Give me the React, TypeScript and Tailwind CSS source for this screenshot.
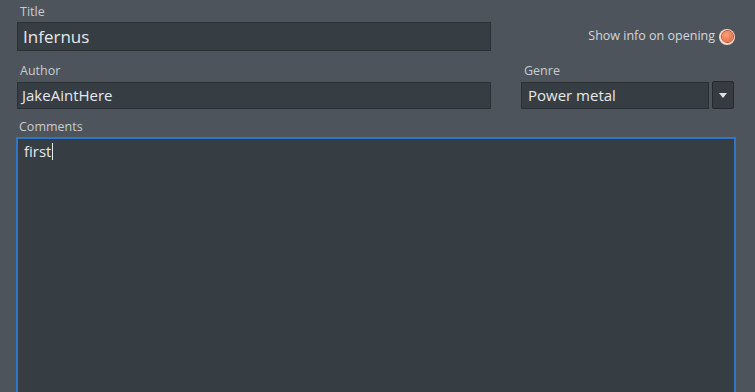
import React from "react";

const font = { fontFamily: '"Open Sans", "Noto Sans", sans-serif' };

function Label({ children }: { children: React.ReactNode }) {
  return <div className="h-[17px] pl-[3px] text-[12.5px] leading-[17px] text-[#c8ccd0]">{children}</div>;
}

export default function App() {
  return (
    <div className="h-[392px] w-[755px] overflow-hidden bg-[#4d545b] text-[#e6e9eb]" style={font}>
      <div className="pl-[17px] pr-[20px] pt-[3px]">
        {/* title row */}
        <Label>Title</Label>
        <div className="mt-[2px] flex items-center">
          <div className="flex h-[29px] w-[474px] items-center border border-[#2b3035] bg-[#363d43] pl-[5px] text-[17px]">
            Infernus
          </div>
          <div className="ml-auto flex items-center gap-[4px] text-[12.5px] text-[#d3d7da]">
            <span>Show info on opening</span>
            <span className="flex h-[16px] w-[16px] items-center justify-center rounded-full bg-[#f6dcd0]">
              <span className="h-[11px] w-[11px] rounded-full bg-[radial-gradient(circle_at_40%_35%,#f8a47c,#e0603a)] ring-1 ring-[#b94a28]" />
            </span>
          </div>
        </div>

        {/* author / genre row */}
        <div className="mt-[11px] flex">
          <div className="w-[474px]">
            <Label>Author</Label>
            <div className="mt-[3px] flex h-[27px] items-center border border-[#2b3035] bg-[#363d43] pl-[4px] text-[15px]">
              JakeAintHere
            </div>
          </div>
          <div className="ml-[30px]">
            <Label>Genre</Label>
            <div className="mt-[2px] flex items-center gap-[3px]">
              <div className="mt-[1px] flex h-[27px] w-[188px] items-center border border-[#2b3035] bg-[#363d43] pl-[6px] text-[15px]">
                Power metal
              </div>
              <div className="flex h-[28px] w-[22px] items-center justify-center rounded-[2px] border border-[#25292d] bg-[#353b41]">
                <svg width="8" height="5" viewBox="0 0 8 5">
                  <path d="M0 0h8L4 5z" fill="#dfe2e4" />
                </svg>
              </div>
            </div>
          </div>
        </div>

        {/* comments */}
        <div className="mt-[9px] -ml-[1px]">
          <Label>Comments</Label>
          <div className="mt-[2px] h-[300px] w-[720px] border-2 border-[#2f77c6] bg-[#363d43] px-[6px] pt-[1px] text-[15px]">
            first<span className="ml-[1px] inline-block h-[17px] w-[1px] translate-y-[3px] bg-[#e6e9eb]" />
          </div>
        </div>
      </div>
    </div>
  );
}
